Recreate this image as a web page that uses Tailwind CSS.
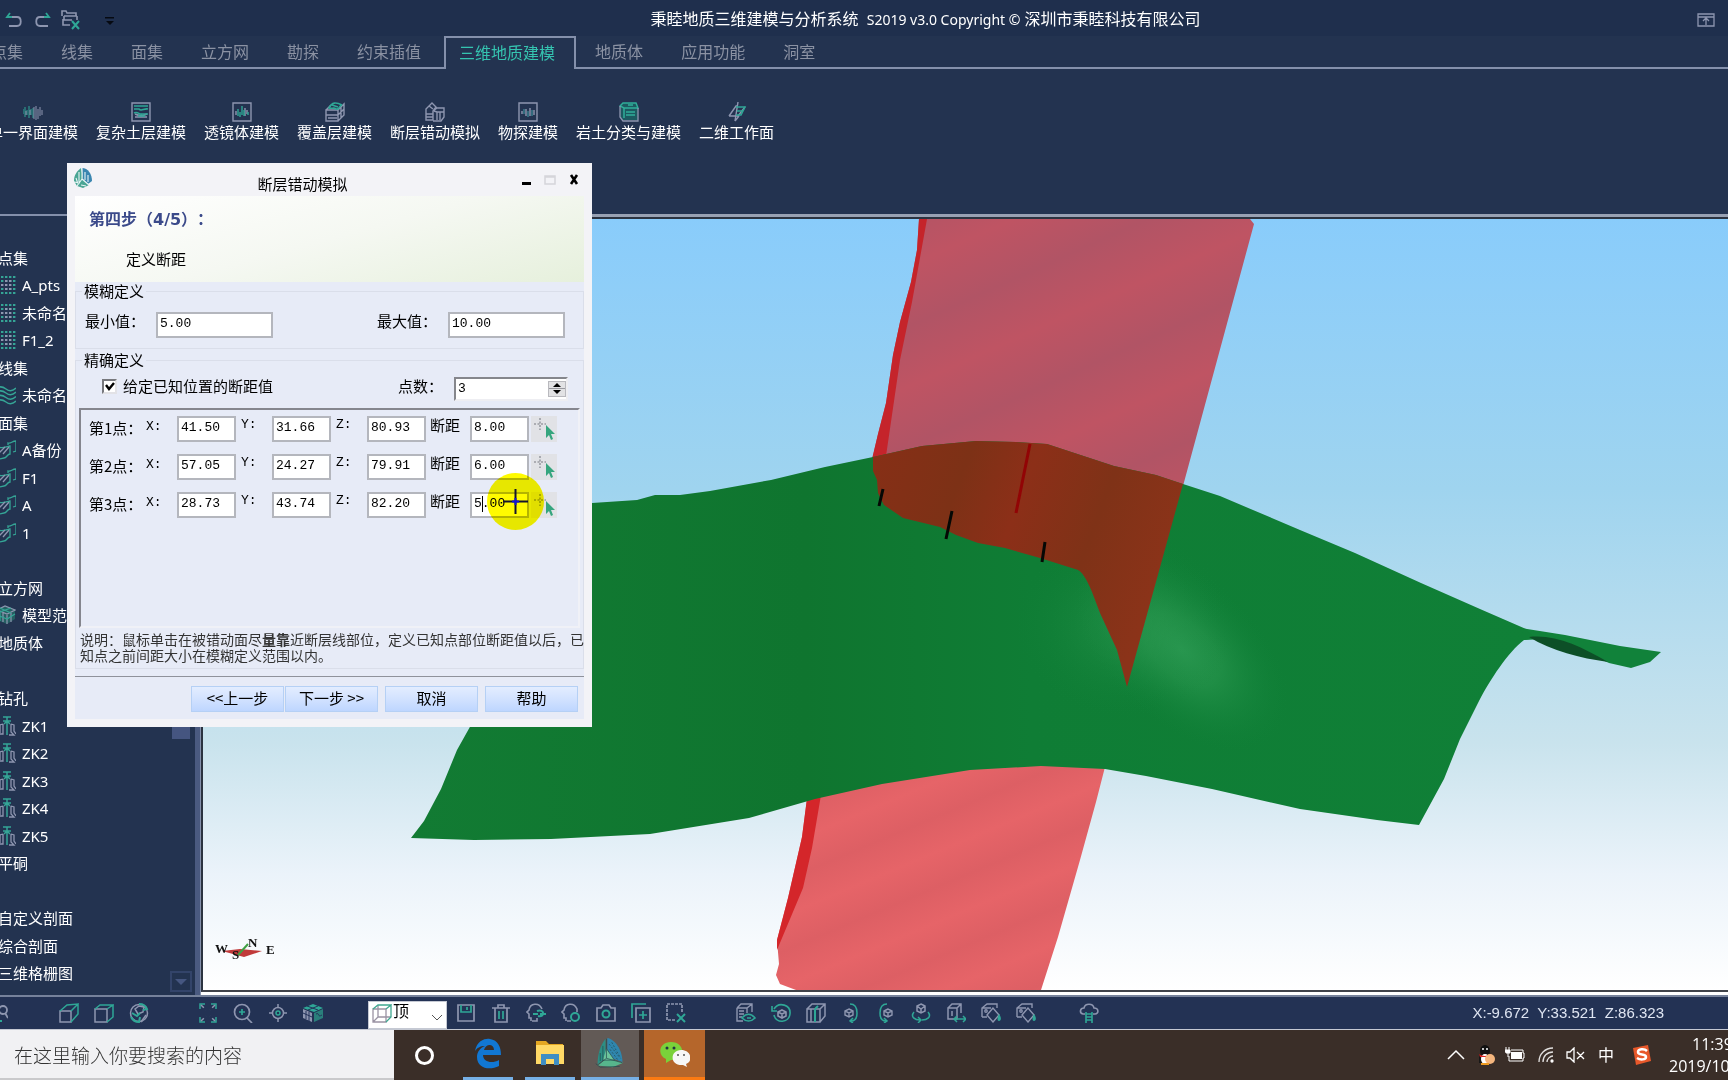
<!DOCTYPE html>
<html lang="zh-CN">
<head>
    <meta charset="UTF-8">
    <meta name="viewport" content="width=device-width, initial-scale=1.0">
    <title>秉睦地质三维建模与分析系统</title>
    <script src="https://cdn.jsdelivr.net/npm/@tailwindcss/browser@4"></script>
</head>
<body class="h-screen flex flex-col overflow-hidden bg-[#233350] text-white font-['Noto_Sans','Noto_Sans_CJK_SC',sans-serif]">

    <!-- 公用图标 -->
    <svg class="hidden">
        <symbol id="i-pts" viewBox="0 0 20 20">
            <path d="M1 2h19M1 6h19M1 14h19M1 18h19M1 10h3M17 10h3" stroke="#35a596" stroke-width="2.200" stroke-dasharray="2.400 1.600"/>
            <path d="M5 10h11M9 6h7M9 14h7" stroke="#8e96b0" stroke-width="2.200" stroke-dasharray="2.400 1.600"/>
        </symbol>
        <symbol id="i-line" viewBox="0 0 20 20">
            <path d="M0 4c3-3 6-3 10 0s7 2 10-1M0 8c3-3 6-3 10 0s7 2 10-1M0 12.500c3-3 6-3 10 0s7 2 10-1M0 17c3-3 6-3 10 0s7 2 10-1" fill="none" stroke="#35a596" stroke-width="1.500"/>
        </symbol>
        <symbol id="i-face" viewBox="0 0 20 20">
            <path d="M12 5V3c3 1 4-2 8-2v10l-3 1M3 7c3 2 6 0 11-1v8c-3 0-3 4-6 4l-5 1v-4l-2-1V8z" fill="none" stroke="#35a596" stroke-width="1.300"/>
            <path d="M3 13l6-6M7 14l6-7" stroke="#8e96b0" stroke-width="1.300"/>
        </symbol>
        <symbol id="i-cube" viewBox="0 0 20 20">
            <path d="M1 5l8-4 10 4v9l-8 5-10-4z" fill="#255f62"/>
            <g fill="none" stroke="#8e96b0" stroke-width="1.200">
                <path d="M1 5l8-4 10 4-8 4zM11 10v9M15 8v9M7 8v9"/>
            </g>
            <path d="M1 10l10 4 8-5M4 3l11 5M15 3L4 7v9" fill="none" stroke="#35a596" stroke-width="1.200"/>
        </symbol>
        <symbol id="i-drill" viewBox="0 0 20 20">
            <path d="M7 1h8M11 1v18M7 5h8M11 5l-3 3M11 5l3 3" fill="none" stroke="#35a596" stroke-width="1.500"/>
            <path d="M7 8v10H2M7 8L4 9v8M15 8v8l3 3h-5M15 8l3 1v6l2 3" fill="none" stroke="#8e96b0" stroke-width="1.300"/>
        </symbol>
        <symbol id="i-logo" viewBox="0 0 36 36">
            <path d="M15 1C23 2 32 14 32 28L20 24 15 18z" fill="#2f86ad"/>
            <path d="M13 2C8 8 4 18 4 31l9-7z" fill="#2c8f84"/>
            <path d="M4 32l10-8 19 5-12 5z" fill="#57b58c"/>
            <path d="M14 13l-4 13 13 0z" fill="#6cc49c"/>
            <g fill="none" stroke="#25484f" stroke-width="1" opacity=".8">
                <path d="M14 2v22M14 24l18 5M14 24L5 31M10 10v17M7 18v9M14 13l9 13H10M2 30l5 4 22-1"/>
                <path d="M17 8l11 14M18 14l9 12M20 6l10 18" stroke-dasharray="2 2"/>
            </g>
        </symbol>
        <symbol id="i-logo-small" viewBox="0 0 20 22">
            <path d="M9 1c6 0 10 6 10 13l-4 3-5-5z" fill="#3a86b0"/>
            <path d="M8 1C4 4 1 8 1 14l3 5 6 2 6-3-6-6z" fill="#4aa594"/>
            <g fill="none" stroke="#e8f4f5" stroke-width="1.100">
                <path d="M9 1v11M9 12l7 6M9 12l-5 7M6 5v10M3 11l2 6M12 5v8M15 8v7M1 15l6 1M8 18l5 1"/>
            </g>
        </symbol>
        <symbol id="i-pick" viewBox="0 0 24 24">
            <path d="M8 1v12M2 7h12" stroke="#9a9ca3" stroke-width="1.600" stroke-dasharray="2 1.500"/>
            <path d="M14 8v13l3-3 2 5 2-1-2-5h4z" fill="#35a57e"/>
        </symbol>
        <symbol id="i-bucket" viewBox="0 0 20 20">
            <g fill="none" stroke="#8e96b0" stroke-width="1.400">
                <path d="M1 14V5l5-4h10v4M1 5h9M1 14l5 0"/>
                <path d="M12 5l-6 7 6 7 6-7z"/><circle cx="5" cy="8" r="1.200"/>
            </g>
            <path d="M18 11c3 4 2 7 0 7s-2-3 0-7z" fill="#2fa796"/>
        </symbol>
        <symbol id="i-rot" viewBox="0 0 20 20">
            <path d="M8 6l4 2v4l-4 2-4-2V8zM4 8l4 2 4-2M8 10v4" fill="none" stroke="#8e96b0" stroke-width="1.400"/>
            <path d="M9 1c5 0 7 4 7 9s-2 8-6 8M12 15l-3 3 3 2" fill="none" stroke="#2fa796" stroke-width="1.500"/>
        </symbol>
    </svg>

    <!-- 标题栏 -->
    <header class="h-9 shrink-0 bg-[#1f2f4d] flex items-center relative">
        <div class="flex items-center gap-2 pl-1 pt-1">
            <button type="button" aria-label="撤销" class="w-5 h-5">
                <svg viewBox="0 0 20 20" fill="none" stroke-width="1.800"><path d="M4 7h9c5 0 5 9 0 9H5" stroke="#8e96b0"/><path d="M6 3L3 7h5" stroke="#2fa796"/></svg>
            </button>
            <button type="button" aria-label="重做" class="w-5 h-5">
                <svg viewBox="0 0 20 20" fill="none" stroke-width="1.800"><path d="M16 7H8c-5 0-5 9 0 9h8" stroke="#8e96b0"/><path d="M14 3l3 4h-5" stroke="#2fa796"/></svg>
            </button>
            <button type="button" aria-label="清除" class="w-5 h-5">
                <svg viewBox="0 0 20 20" fill="none" stroke-width="1.600"><path d="M2 6V1h4l1 2h9v3M4 6h13M10 15H3V9M4 6v4M17 6v4M3 10h9" stroke="#8e96b0"/><path d="M12 11l7 8M19 11l-7 8" stroke="#2fa796" stroke-width="2"/></svg>
            </button>
            <button type="button" aria-label="更多" class="w-3 h-5 ml-4">
                <svg viewBox="0 0 12 20" fill="#060a12"><path d="M1 7h9v1.500H1zM2 11h8l-4 4z"/></svg>
            </button>
        </div>
        <h1 class="absolute inset-x-0 top-[7px] text-center text-base leading-6 pl-[123px] whitespace-pre">秉睦地质三维建模与分析系统  <span class="text-sm">S2019 v3.0 Copyright ©</span> 深圳市秉睦科技有限公司</h1>
        <button type="button" aria-label="折叠" class="ml-auto mr-3 mt-1 w-5 h-5">
            <svg viewBox="0 0 20 20" fill="none" stroke="#8e96b0" stroke-width="1.300"><path d="M2 4h16v12H2zM2 7h16M10 15V9M7 11l3-3 3 3"/></svg>
        </button>
    </header>

    <!-- 选项卡 -->
    <nav class="h-[33px] shrink-0 flex items-stretch text-base leading-[30px] text-[#8b92a3] whitespace-nowrap">
        <div class="flex border-b-2 border-[#8490ab]">
            <button type="button" class="-ml-7 px-[19px]">点集</button>
            <button type="button" class="px-[19px]">线集</button>
            <button type="button" class="px-[19px]">面集</button>
            <button type="button" class="px-[19px]">立方网</button>
            <button type="button" class="px-[19px]">勘探</button>
            <button type="button" class="pl-[19px] pr-[23px]">约束插值</button>
        </div>
        <button type="button" class="pl-[13px] pr-[19px] pb-1 border-2 border-b-0 border-[#8490ab] text-[#35c4b0]">三维地质建模</button>
        <div class="flex flex-1 border-b-2 border-[#8490ab]">
            <button type="button" class="px-[19px]">地质体</button>
            <button type="button" class="px-[19px]">应用功能</button>
            <button type="button" class="px-[19px]">洞室</button>
        </div>
    </nav>

    <!-- 功能区 -->
    <section class="h-[145px] shrink-0 flex items-start gap-[18px] pt-[33px] -ml-3 text-[15px] leading-[21px] whitespace-nowrap">
        <button type="button" class="flex flex-col items-center">
            <svg class="w-5 h-5" viewBox="0 0 20 20" fill="none"><path d="M0 7v5M2 5v10M4 8v5M6 4v12M8 7v6M10 6v10" stroke="#2fa796"/><path d="M3 9v4M7 8v5M11 5v12M13 4v14M15 7v10M17 5v9M19 8v5" stroke="#8e96b0"/></svg>
            单一界面建模
        </button>
        <button type="button" class="flex flex-col items-center">
            <svg class="w-5 h-5" viewBox="0 0 20 20" fill="none"><path d="M1 1h18v18H1zM4 15h12M4 12c4 2 8 2 12 0" stroke="#8e96b0" stroke-width="1.400"/><path d="M3 4h14M3 7h5c2 3 5-1 9 0M3 11c4-2 5 2 8 1h6M7 14h7" stroke="#2fa796" stroke-width="1.600"/></svg>
            复杂土层建模
        </button>
        <button type="button" class="flex flex-col items-center">
            <svg class="w-5 h-5" viewBox="0 0 20 20" fill="none"><path d="M1 1h18v18H1zM4 9v4M13 6v8M15 8v4" stroke="#8e96b0" stroke-width="1.400"/><path d="M6 7v7M8 10v5M10 4v9M12 8v6M16 10v3" stroke="#2fa796" stroke-width="1.400"/></svg>
            透镜体建模
        </button>
        <button type="button" class="flex flex-col items-center">
            <svg class="w-5 h-5" viewBox="0 0 20 20" fill="none"><path d="M1 8v11h12V8zM13 19l6-6V2l-6 6M1 8l5-5M1 13h12l6-6M3 16h9M16 5v11" stroke="#8e96b0" stroke-width="1.400"/><path d="M4 6c3-6 7-6 13-3-3 0-2 5-6 4-2-2-4 0-7-1zM7 3l6 2" stroke="#2fa796" stroke-width="1.600"/></svg>
            覆盖层建模
        </button>
        <button type="button" class="flex flex-col items-center">
            <svg class="w-5 h-5" viewBox="0 0 20 20" fill="none" stroke="#8e96b0" stroke-width="1.400"><path d="M1 7l6-6 4 4-3 4v9H1zM1 12h7M1 15h7M8 9l4-3h7v9l-3 4H8M12 18v-8h7M12 10L9 9M15 10v8M4 4l4 3"/></svg>
            断层错动模拟
        </button>
        <button type="button" class="flex flex-col items-center">
            <svg class="w-5 h-5" viewBox="0 0 20 20" fill="none"><path d="M1 1h18v18H1zM4 9v3M8 7v7M12 6v8M16 8v5" stroke="#8e96b0" stroke-width="1.400"/><path d="M6 7v5M10 9v6M14 8v6" stroke="#39808f" stroke-width="1.400"/></svg>
            物探建模
        </button>
        <button type="button" class="flex flex-col items-center">
            <svg class="w-5 h-5" viewBox="0 0 20 20" fill="none"><path d="M1 4l3-3h13l2 5v12H4l-3-3z" fill="#1c5a60"/><path d="M1 4l3-3h13l2 5H5zM7 10h9M7 13h9M5 6v10M9 3h5" stroke="#2fae99" stroke-width="1.500"/><path d="M1 4v11l3 4h15V6" stroke="#8e96b0" stroke-width="1.300"/></svg>
            岩土分类与建模
        </button>
        <button type="button" class="flex flex-col items-center">
            <svg class="w-5 h-5" viewBox="0 0 20 20" fill="none"><path d="M11 0L8 19M2 14L9 4h2M2 14h9l7-9M8 19l4-5" stroke="#8e96b0" stroke-width="1.400"/><path d="M9 5h9l-4 8h-5M10 9h6" stroke="#2fa796" stroke-width="1.500"/></svg>
            二维工作面
        </button>
    </section>

    <main class="flex-1 min-h-0 flex">
        <!-- 对象树 -->
        <aside class="w-[201px] shrink-0 flex border-t-2 border-[#8490ab]">
            <ul class="flex-1 flex flex-col pt-7 pb-2 text-[15px] leading-5 whitespace-nowrap overflow-hidden">
                <li class="flex-1 flex items-center -ml-0.5">点集</li>
                <li class="flex-1 flex items-center gap-1.5"><svg class="w-5 h-5 -ml-1"><use href="#i-pts"/></svg>A_pts</li>
                <li class="flex-1 flex items-center gap-1.5"><svg class="w-5 h-5 -ml-1"><use href="#i-pts"/></svg>未命名</li>
                <li class="flex-1 flex items-center gap-1.5"><svg class="w-5 h-5 -ml-1"><use href="#i-pts"/></svg>F1_2</li>
                <li class="flex-1 flex items-center -ml-0.5">线集</li>
                <li class="flex-1 flex items-center gap-1.5"><svg class="w-5 h-5 -ml-1"><use href="#i-line"/></svg>未命名</li>
                <li class="flex-1 flex items-center -ml-0.5">面集</li>
                <li class="flex-1 flex items-center gap-1.5"><svg class="w-5 h-5 -ml-1"><use href="#i-face"/></svg>A备份</li>
                <li class="flex-1 flex items-center gap-1.5"><svg class="w-5 h-5 -ml-1"><use href="#i-face"/></svg>F1</li>
                <li class="flex-1 flex items-center gap-1.5"><svg class="w-5 h-5 -ml-1"><use href="#i-face"/></svg>A</li>
                <li class="flex-1 flex items-center gap-1.5"><svg class="w-5 h-5 -ml-1"><use href="#i-face"/></svg>1</li>
                <li class="flex-1"></li>
                <li class="flex-1 flex items-center -ml-0.5">立方网</li>
                <li class="flex-1 flex items-center gap-1.5"><svg class="w-5 h-5 -ml-1"><use href="#i-cube"/></svg>模型范</li>
                <li class="flex-1 flex items-center -ml-0.5">地质体</li>
                <li class="flex-1"></li>
                <li class="flex-1 flex items-center -ml-0.5">钻孔</li>
                <li class="flex-1 flex items-center gap-1.5"><svg class="w-5 h-5 -ml-1"><use href="#i-drill"/></svg>ZK1</li>
                <li class="flex-1 flex items-center gap-1.5"><svg class="w-5 h-5 -ml-1"><use href="#i-drill"/></svg>ZK2</li>
                <li class="flex-1 flex items-center gap-1.5"><svg class="w-5 h-5 -ml-1"><use href="#i-drill"/></svg>ZK3</li>
                <li class="flex-1 flex items-center gap-1.5"><svg class="w-5 h-5 -ml-1"><use href="#i-drill"/></svg>ZK4</li>
                <li class="flex-1 flex items-center gap-1.5"><svg class="w-5 h-5 -ml-1"><use href="#i-drill"/></svg>ZK5</li>
                <li class="flex-1 flex items-center -ml-0.5">平硐</li>
                <li class="flex-1"></li>
                <li class="flex-1 flex items-center -ml-0.5">自定义剖面</li>
                <li class="flex-1 flex items-center -ml-0.5">综合剖面</li>
                <li class="flex-1 flex items-center -ml-0.5">三维格栅图</li>
            </ul>
            <!-- 滚动条 -->
            <div class="w-[22px] mr-[3px] flex flex-col justify-between pb-[3px]">
                <div class="h-[523px] mx-0.5 bg-[#455580]"></div>
                <button type="button" aria-label="向下滚动" class="h-[21px] border-2 border-[#33446a] flex items-center justify-center">
                    <svg class="w-3 h-2" viewBox="0 0 12 8"><path d="M0 1h12L6 7z" fill="#455680"/></svg>
                </button>
            </div>
            <div class="w-1.5 bg-[#4a5a80] border-r border-[#8490ab]"></div>
        </aside>

        <!-- 三维视图 -->
        <div class="flex-1 min-w-0 flex flex-col bg-white border-t-3 border-[#98a1b3]">
            <div class="flex-1 min-h-0 border-2 border-r-0 border-[#2b3340] border-b-[#40434a] mb-[3px]">
                <svg class="block w-full h-full" viewBox="203 219 1525 771" preserveAspectRatio="none">
                    <defs>
                        <linearGradient id="sky" x1="0" y1="0" x2="0" y2="1">
                            <stop offset="0" stop-color="#89ccfb"/>
                            <stop offset=".35" stop-color="#9fd4ef"/>
                            <stop offset=".68" stop-color="#c9e3ed"/>
                            <stop offset=".85" stop-color="#ebf3fa"/>
                            <stop offset="1" stop-color="#fff"/>
                        </linearGradient>
                        <linearGradient id="green" x1="0" y1="0" x2="1" y2="0">
                            <stop offset="0" stop-color="#127b33"/>
                            <stop offset=".35" stop-color="#0f752f"/>
                            <stop offset=".55" stop-color="#0f7d35"/>
                            <stop offset="1" stop-color="#108037"/>
                        </linearGradient>
                        <radialGradient id="shine">
                            <stop offset="0" stop-color="#2e9c55"/>
                            <stop offset=".35" stop-color="#2a9850" stop-opacity=".7"/>
                            <stop offset=".7" stop-color="#1c8c44" stop-opacity=".3"/>
                            <stop offset="1" stop-color="#0f8037" stop-opacity="0"/>
                        </radialGradient>
                        <linearGradient id="fault" gradientUnits="userSpaceOnUse" x1="900" y1="210" x2="945" y2="310" spreadMethod="repeat">
                            <stop offset="0" stop-color="#b15465"/>
                            <stop offset=".5" stop-color="#bf5463"/>
                            <stop offset="1" stop-color="#b15465"/>
                        </linearGradient>
                        <linearGradient id="faultLow" gradientUnits="userSpaceOnUse" x1="880" y1="770" x2="905" y2="830" spreadMethod="repeat">
                            <stop offset="0" stop-color="#dd5f64"/>
                            <stop offset=".5" stop-color="#e66468"/>
                            <stop offset="1" stop-color="#dd5f64"/>
                        </linearGradient>
                        <linearGradient id="cut" x1="0" y1="0" x2="1" y2=".3">
                            <stop offset="0" stop-color="#872f16"/>
                            <stop offset=".3" stop-color="#7d3116"/>
                            <stop offset=".5" stop-color="#8c2f18"/>
                            <stop offset=".75" stop-color="#7f3217"/>
                            <stop offset="1" stop-color="#8b3319"/>
                        </linearGradient>
                    </defs>
                    <rect x="203" y="219" width="1525" height="771" fill="url(#sky)"/>
                    <!-- 断层面 -->
                    <path d="M919 219L1250 219 1254 224 1183 486 1040 480 872 460 878 434 886 403 893 355 900 322 911 282 917 250z" fill="url(#fault)"/>
                    <path d="M919 219h8L912 302 900 360 886 456 872 459 878 434 886 403 893 355 900 322 911 282 917 250z" fill="#c5242b"/>
                    <path d="M807 799L880 765 1041 755 1105 767 1096 802 1080 860 1058 937 1041 990H796L780 984 776 975 779 964 777 940 788 898 802 837z" fill="url(#faultLow)"/>
                    <path d="M807 798L821 795 812 848 803 888 777 950V940L788 898 802 837z" fill="#d4262a"/>
                    <!-- 地层面 -->
                    <path d="M1520 628L1565 635 1620 646 1661 652 1650 662 1631 668 1609 663 1576 648 1545 639 1524 640z" fill="#11823a"/>
                    <path d="M560 508L592 503 637 500 655 495 680 495 710 491 771 480 825 467 873 457 922 446 976 441 1016 442 1047 444 1114 466 1156 475 1183 484 1220 496 1300 530 1355 553 1421 583 1480 609 1526 629 1536 638 1524 640C1508 652 1490 680 1479 701L1460 739 1444 779 1419 825 1377 820 1300 809 1212 789 1146 776 1105 769 1041 766 970 770 882 784 815 799 749 818 650 834 551 839 474 840 411 838 424 821 441 789 457 750 471 725z" fill="url(#green)"/>
                    <path d="M1529 637C1555 634 1580 646 1608 662 1580 658 1552 651 1529 637z" fill="#0d4f27"/>
                    <ellipse cx="1182" cy="650" rx="130" ry="75" fill="url(#shine)" transform="rotate(42 1182 650)" opacity=".85"/>
                    <ellipse cx="1125" cy="625" rx="110" ry="95" fill="url(#shine)" opacity=".4"/>
                    <path d="M873 457L922 446 976 441 1016 442 1047 444 1114 466 1156 475 1183 484 1127 687 1117 650 1111 637 1100 613 1092 592C1087 580 1082 570 1075 569L1040 558 1005 548 978 543 956 535 940 527 903 518 884 505 878 493 877 480 873 471z" fill="url(#cut)"/>
                    <path d="M1030 444l-14 69" stroke="#920405" stroke-width="3"/>
                    <path d="M883 489l-4 17M952 511l-6 28M1045 542l-3 20" stroke="#050805" stroke-width="3"/>
                    <!-- 方位标 -->
                    <path d="M222 951l18-2 22 2-18 6z" fill="#c03a3a"/>
                    <path d="M238 955l10-11" stroke="#3fa043" stroke-width="2"/>
                    <g fill="#111" font-family="Liberation Serif, serif" font-weight="bold" font-size="13">
                        <text x="215" y="953">W</text><text x="248" y="947">N</text><text x="266" y="954">E</text><text x="232" y="959">S</text>
                    </g>
                </svg>
            </div>
        </div>
    </main>

    <!-- 视图工具栏 -->
    <footer class="h-[35px] shrink-0 flex items-center border-t-2 border-b border-t-[#76829b] border-b-[#c5c9d3] bg-[#23335a]/40">
        <button type="button" aria-label="查找" class="w-5 h-5 -ml-3 mr-[51px]"><svg viewBox="0 0 20 20" fill="none" stroke="#8e96b0" stroke-width="1.800"><circle cx="15" cy="7" r="4"/><path d="M17 10l3 5"/><path d="M10 18h4" stroke="#2fa796"/></svg></button>
        <div class="flex gap-[15px]">
            <button type="button" aria-label="透视" class="w-5 h-5"><svg viewBox="0 0 20 20" fill="none" stroke-width="1.500"><path d="M1 8h11v11H1z" stroke="#8e96b0"/><path d="M1 8l7-6 11-1-7 7M19 1v10l-7 8" stroke="#2fa796"/></svg></button>
            <button type="button" aria-label="平行" class="w-5 h-5"><svg viewBox="0 0 20 20" fill="none" stroke-width="1.500"><path d="M1 6h12v13H1z" stroke="#8e96b0"/><path d="M1 6l5-4h13l-6 4M19 2v12l-6 5" stroke="#2fa796"/></svg></button>
            <button type="button" aria-label="旋转" class="w-5 h-5"><svg viewBox="0 0 20 20" fill="none" stroke-width="1.500"><circle cx="10" cy="10" r="8.500" stroke="#8e96b0"/><path d="M6 6l4-3 5 1-1 5-5 2zM12 19l5-7" stroke="#8e96b0"/><path d="M10 1c4 0 7 2 8 5l-4 1M2 14c2 4 5 5 8 5l1-5M3 10l5 3 3-3" stroke="#2fa796" stroke-width="2"/></svg></button>
        </div>
        <div class="flex gap-[15px] ml-[49px]">
            <button type="button" aria-label="全图" class="w-5 h-5"><svg viewBox="0 0 20 20" fill="none" stroke-width="1.500"><path d="M7 1H2v5M13 1h5v5M7 19H2v-5M13 19h5v-5" stroke="#2fa796"/><path d="M3 2l5 5M17 2l-5 5M3 18l5-5M17 18l-5-5" stroke="#8e96b0" stroke-dasharray="4 3"/></svg></button>
            <button type="button" aria-label="放大" class="w-5 h-5"><svg viewBox="0 0 20 20" fill="none" stroke-width="1.700"><circle cx="9" cy="9" r="7.500" stroke="#8e96b0"/><path d="M14 15l5 5" stroke="#8e96b0"/><path d="M9 6v6M6 9h6" stroke="#2fa796"/></svg></button>
            <button type="button" aria-label="定位" class="w-5 h-5"><svg viewBox="0 0 20 20" fill="none" stroke-width="1.500"><circle cx="10" cy="10" r="5.500" stroke="#8e96b0"/><circle cx="10" cy="10" r="2" stroke="#2fa796"/><path d="M10 1v3M10 16v3M1 10h3M16 10h3" stroke="#8e96b0"/></svg></button>
            <button type="button" aria-label="立方体" class="w-5 h-5"><svg viewBox="0 0 20 20"><path d="M0 5l10-4 10 4-9 4z" fill="#2fa796"/><path d="M0 6l9 4v9l-9-4z" fill="#8e96b0"/><path d="M11 10l9-4v9l-9 4z" fill="#2a7f7b"/><path d="M3 8v8M6 9v9M0 10l9 4M4 3l11 4M15 3L5 7M13 11c4-2 1 4 6 1" stroke="#23335a" fill="none"/></svg></button>
        </div>
        <div class="relative ml-[45px] w-[79px] h-7">
            <select aria-label="视图方向" class="appearance-none w-full h-full bg-white text-black text-base leading-4 pl-6 pb-2 rounded-none border border-[#c5c9d3]">
                <option>顶</option>
            </select>
            <svg class="absolute left-1 top-1 w-5 h-5 pointer-events-none" viewBox="0 0 20 20" fill="none" stroke-width="1.300"><path d="M1 6h13v13H1zM6 2v12h13M6 14l-5 5" stroke="#9a93a3"/><path d="M1 6l5-4h13l-5 4M19 2v12l-5 5" stroke="#3fa890"/></svg>
            <svg class="absolute right-1 top-3 w-3 h-3 pointer-events-none" viewBox="0 0 12 12" fill="none" stroke="#555"><path d="M1 4l5 5 5-5"/></svg>
        </div>
        <div class="flex gap-[15px] ml-[9px]">
            <button type="button" aria-label="保存" class="w-5 h-5"><svg viewBox="0 0 20 20" fill="none" stroke-width="1.700"><path d="M2 2h16v16H2z" stroke="#8e96b0"/><path d="M5 2v7h10V2M11 4v3" stroke="#2fa796"/></svg></button>
            <button type="button" aria-label="删除" class="w-5 h-5"><svg viewBox="0 0 20 20" fill="none" stroke-width="1.700"><path d="M1 5h18M7 5V2h6v3M4 5v14h12V5" stroke="#8e96b0"/><path d="M8 8v8M12 8v8" stroke="#2fa796"/></svg></button>
            <button type="button" aria-label="漫游" class="w-5 h-5"><svg viewBox="0 0 20 20" fill="none" stroke-width="1.600"><path d="M5 18v-3H3v-4l-2-2 2-2C4 0 13-1 16 6M6 18h5v-3" stroke="#8e96b0"/><path d="M7 11h5M11 8c8-3 8 7 1 5M14 11h6" stroke="#2fa796" stroke-width="2"/></svg></button>
            <button type="button" aria-label="观察" class="w-5 h-5"><svg viewBox="0 0 20 20" fill="none" stroke-width="1.600"><path d="M5 18v-3H3v-4l-2-2 2-2C4 0 13-1 16 6v3M6 18h4" stroke="#8e96b0"/><circle cx="14" cy="14" r="4" stroke="#2fa796" stroke-width="2"/></svg></button>
            <button type="button" aria-label="截图" class="w-5 h-5"><svg viewBox="0 0 20 20" fill="none" stroke-width="1.700"><path d="M1 5h4l2-3h6l2 3h4v13H1z" stroke="#8e96b0"/><circle cx="10" cy="11" r="3.500" stroke="#2fa796" stroke-width="2"/></svg></button>
            <button type="button" aria-label="新建" class="w-5 h-5"><svg viewBox="0 0 20 20" fill="none" stroke-width="1.700"><path d="M5 5h14v14H5z" stroke="#8e96b0"/><path d="M1 15V1h14M12 8v8M8 12h8" stroke="#2fa796"/></svg></button>
            <button type="button" aria-label="取消选择" class="w-5 h-5"><svg viewBox="0 0 20 20" fill="none" stroke-width="1.700"><path d="M9 17H1V1h15v8" stroke="#8e96b0" stroke-dasharray="3 1"/><path d="M11 11l8 8M19 11l-8 8" stroke="#2fa796" stroke-width="2"/></svg></button>
        </div>
        <div class="flex gap-[15px] ml-[50px]">
            <button type="button" aria-label="显示" class="w-5 h-5"><svg viewBox="0 0 20 20" fill="none" stroke-width="1.400"><path d="M1 5v13h6M1 5l4-4h11v8M1 5h10l5-4M11 5v5M3 8h5M3 11h5M3 14h3" stroke="#8e96b0"/><path d="M6 15c4-5 9-5 13 0-4 4-9 4-13 0zM11 15h4" stroke="#2fa796" stroke-width="1.700"/></svg></button>
            <button type="button" aria-label="自转" class="w-5 h-5"><svg viewBox="0 0 20 20" fill="none" stroke-width="1.600"><path d="M3 6c5-8 17-4 16 5s-14 10-16 1M1 3v5h5" stroke="#2fa796"/><path d="M11 7l4 2v4l-4 2-4-2V9zM7 9l4 2 4-2M11 11v4" stroke="#8e96b0"/></svg></button>
            <button type="button" aria-label="切面" class="w-5 h-5"><svg viewBox="0 0 20 20" fill="none" stroke-width="1.500"><path d="M1 6v13h13V6zM1 6l5-5h13v12l-5 6M14 6l5-5M5 6v13" stroke="#8e96b0"/><path d="M9 6v13M12 3L9 6" stroke="#2fa796" stroke-width="2"/></svg></button>
            <button type="button" aria-label="右转" class="w-5 h-5"><svg viewBox="0 0 20 20"><use href="#i-rot"/></svg></button>
            <button type="button" aria-label="左转" class="w-5 h-5"><svg viewBox="0 0 20 20"><use href="#i-rot" transform="matrix(-1 0 0 1 20 0)"/></svg></button>
            <button type="button" aria-label="翻转" class="w-5 h-5"><svg viewBox="0 0 20 20" fill="none" stroke-width="1.500"><path d="M10 1l4 2v5l-4 2-4-2V3zM6 3l4 3 4-3M10 6v4" stroke="#8e96b0"/><path d="M3 9c-4 5 1 8 6 8M17 9c4 5-1 8-6 8M7 14l3 3-3 3" stroke="#2fa796"/></svg></button>
            <button type="button" aria-label="平移" class="w-5 h-5"><svg viewBox="0 0 20 20" fill="none" stroke-width="1.500"><path d="M2 5v11h9V5zM2 5l4-4h9v9M11 5l4-4M6 8v5" stroke="#8e96b0"/><path d="M8 16h12M11 13l-3 3 3 3M17 13l3 3-3 3" stroke="#2fa796"/></svg></button>
            <button type="button" aria-label="填充" class="w-5 h-5"><svg viewBox="0 0 20 20"><use href="#i-bucket"/></svg></button>
            <button type="button" aria-label="全部填充" class="w-5 h-5"><svg viewBox="0 0 20 20"><use href="#i-bucket"/></svg></button>
        </div>
        <button type="button" aria-label="钻孔" class="w-5 h-5 ml-[43px]"><svg viewBox="0 0 20 20" fill="none" stroke-width="1.600"><path d="M6 11H4c-4-1-3-6 1-6 1-5 9-5 10 0 5 0 5 6 1 6h-2" stroke="#8e96b0"/><path d="M7 9v11M13 9v11M7 11h6M7 14h6M7 17h6" stroke="#2fa796"/></svg></button>
        <output class="ml-auto mr-16 text-[15px] text-[#dfe5f2] whitespace-pre font-['Liberation_Sans',sans-serif]">X:-9.672  Y:33.521  Z:86.323</output>
    </footer>

    <!-- 任务栏 -->
    <div class="h-[50px] shrink-0 flex bg-[#3a2e28] overflow-hidden">
        <input type="text" aria-label="搜索" placeholder="在这里输入你要搜索的内容" class="w-[394px] h-full shrink-0 bg-[#f1f1f3] px-[14px] text-[19px] text-[#222] placeholder:text-[#333] border-b-2 border-[#c9c9cb] font-['Noto_Sans_CJK_SC',sans-serif] font-light">
        <button type="button" aria-label="Cortana" class="w-[61px] flex items-center justify-center"><span class="w-[19px] h-[19px] rounded-full border-3 border-white"></span></button>
        <button type="button" aria-label="Edge" class="ml-0.5 w-[62px] px-[6px] flex flex-col items-center justify-end">
            <svg class="w-7 h-8 mb-2" viewBox="0 0 28 32"><path d="M1 14C3 3 12 1 16 2c8 1 11 8 11 16H9c0 7 9 9 16 5v6C15 34 3 31 3 20c0-5 3-9 8-11-5 0-8 2-10 5zm9-1h10c0-6-8-7-10 0z" fill="#1177d3"/></svg>
            <span class="w-full h-[3px] bg-[#76b0e6]"></span>
        </button>
        <button type="button" aria-label="文件资源管理器" class="w-[62px] px-[6px] flex flex-col items-center justify-end">
            <svg class="w-7 h-7 mb-2.5" viewBox="0 0 28 28"><path d="M0 2h10l3 3h14v20H0z" fill="#e4a722"/><path d="M0 6h28v19H0z" fill="#ffd966"/><path d="M5 15h18v11h-5v-6h-8v6H5z" fill="#3f8ec4"/></svg>
            <span class="w-full h-[3px] bg-[#76b0e6]"></span>
        </button>
        <button type="button" aria-label="地质建模" class="w-[58px] bg-[#625a56] flex flex-col items-center justify-end">
            <svg class="w-8 h-9 mb-1.5"><use href="#i-logo"/></svg>
            <span class="w-full h-[3px] bg-[#76b0e6]"></span>
        </button>
        <button type="button" aria-label="微信" class="ml-[5px] w-[61px] bg-[#b5662b] flex flex-col items-center justify-end">
            <svg class="w-[30px] h-[26px] mb-2.5" viewBox="0 0 30 26"><path d="M11 1c15 0 15 19 0 18l-5 3 0-4C-4 13 0 1 11 1z" fill="#7ad13a"/><circle cx="7" cy="7" r="1.500" fill="#234"/><circle cx="14" cy="7" r="1.500" fill="#234"/><path d="M21 9c11 0 12 12 5 14l1 3-4-2C9 25 10 9 21 9z" fill="#f7f7f7"/><circle cx="18" cy="14" r="1" fill="#555"/><circle cx="24" cy="14" r="1" fill="#555"/></svg>
            <span class="w-full h-[3px] bg-[#fb7a12]"></span>
        </button>
        <div class="ml-auto flex items-center">
            <svg class="w-[18px] h-3 mr-3" viewBox="0 0 18 12" fill="none" stroke="#fff" stroke-width="1.500"><path d="M1 10l8-8 8 8"/></svg>
            <svg class="w-[18px] h-5 mr-[10px]" viewBox="0 0 18 20"><ellipse cx="8" cy="6" rx="5" ry="6" fill="#111"/><path d="M2 9h12l2 9H2z" fill="#181818"/><ellipse cx="8" cy="14" rx="4" ry="5" fill="#fff"/><path d="M2 9c4 3 9 2 12 0v3H3z" fill="#d8231f"/><circle cx="13" cy="14" r="5" fill="#f5b67e"/><path d="M4 19h8" stroke="#ee9b22" stroke-width="2"/><circle cx="6" cy="4" r="1" fill="#fff"/><circle cx="10" cy="4" r="1" fill="#fff"/></svg>
            <svg class="w-5 h-4 mr-[13px]" viewBox="0 0 20 16"><path d="M6 5h11v7H6z" fill="#fff"/><path d="M6 3h12v3h1v5h-1v3H4V9" fill="none" stroke="#fff"/><path d="M1 0v3M4 0v3M0 3h5v3H1zM3 6v4" fill="#fff" stroke="#fff"/></svg>
            <svg class="w-4 h-4 mr-[12px]" viewBox="0 0 16 16" fill="none" stroke="#fff" stroke-width="1.300"><path d="M1 15C1 7 7 1 15 1M5 15c0-6 4-10 10-10M9 15c0-3 3-6 6-6" stroke-opacity=".85"/><circle cx="14" cy="14" r="1" fill="#fff"/></svg>
            <svg class="w-[19px] h-4 mr-[13px]" viewBox="0 0 19 16" fill="none" stroke="#fff" stroke-width="1.300"><path d="M1 5h3l4-4v14l-4-4H1zM11 5l7 7M18 5l-7 7"/></svg>
            <span class="w-4 text-base leading-5 mr-[18px]">中</span>
            <svg class="w-5 h-5 mr-[17px]" viewBox="0 0 20 20"><path d="M1 3L16 0l3 16-15 4z" fill="#e8582a"/><path d="M15 6c-3-3-9-2-9 1 0 4 8 1 8 5 0 3-6 3-9 1" fill="none" stroke="#fff" stroke-width="2.500"/></svg>
            <time class="w-[59px] text-base leading-[22px] overflow-hidden whitespace-nowrap font-['Open_Sans','Noto_Sans',sans-serif]"><span class="block pl-[23px] w-20">11:39</span><span class="block w-20">2019/10</span></time>
        </div>
    </div>

    <!-- 断层错动模拟 对话框 -->
    <div role="dialog" aria-labelledby="dlg-title" class="absolute left-[67px] top-[163px] w-[525px] px-2 pb-2 bg-[#f3f3f7] text-black text-[15px] leading-[18px] whitespace-nowrap font-['Noto_Sans_CJK_SC',sans-serif] [text-spacing-trim:space-all]">
        <div class="h-[33px] flex items-start relative">
            <svg class="w-5 h-[22px] mt-1 -ml-0.5"><use href="#i-logo-small"/></svg>
            <h2 id="dlg-title" class="absolute inset-x-0 top-3 text-center pr-[54px]">断层错动模拟</h2>
            <div class="ml-auto flex gap-3 pt-2 pr-1">
                <button type="button" aria-label="最小化" class="w-3 h-4"><svg viewBox="0 0 12 16"><path d="M2 11h9v3H2z"/></svg></button>
                <button type="button" aria-label="最大化" class="w-3 h-4"><svg viewBox="0 0 12 16" fill="none" stroke="#d5d5da" stroke-width="1.500"><path d="M1 5h10v8H1zM1 6h10"/></svg></button>
                <button type="button" aria-label="关闭" class="w-3 h-4"><svg viewBox="0 0 12 16" stroke="#000" stroke-width="2.600"><path d="M3 4l6 9M9 4l-6 9"/></svg></button>
            </div>
        </div>
        <div class="h-[86px] bg-linear-165 from-white via-[#f5f8f2] to-[#e6f0dc] pt-[14px] pl-[14px]">
            <h3 class="font-bold text-base leading-5 text-[#3b4a8a] font-['DejaVu_Sans','Noto_Sans_CJK_SC',sans-serif]">第四步（4/5）：</h3>
            <p class="mt-5 pl-[37px]">定义断距</p>
        </div>
        <div class="bg-[#e7ebf7] pb-[7px]">
            <fieldset class="min-w-0 h-[67px] border border-[#dadeea]">
                <legend class="ml-1.5 px-0.5">模糊定义</legend>
                <div class="h-[50px] flex items-center pl-[9px] pr-[18px]">
                    <label for="min" class="w-[71px] pb-2">最小值：</label>
                    <input id="min" type="text" value="5.00" class="w-[117px] h-[26px] px-0.5 pb-1 bg-white border-2 border-[#b4b6bd] text-[13px] font-['Liberation_Mono',monospace]">
                    <label for="max" class="w-[71px] pb-2 ml-auto">最大值：</label>
                    <input id="max" type="text" value="10.00" class="w-[117px] h-[26px] px-0.5 pb-1 bg-white border-2 border-[#b4b6bd] text-[13px] font-['Liberation_Mono',monospace]">
                </div>
            </fieldset>
            <fieldset class="min-w-0 mt-0.5 border border-[#dadeea]">
                <legend class="ml-1.5 px-0.5">精确定义</legend>
                <div class="h-[39px] flex items-center pl-[26px] pr-[15px]">
                    <span class="relative w-[15px] h-[15px] mb-1 mr-1.5">
                        <input id="known" type="checkbox" checked class="appearance-none block w-full h-full bg-white border-2 border-[#77787d] border-r-[#e2e2e6] border-b-[#e2e2e6]">
                        <svg class="absolute inset-0 pointer-events-none" viewBox="0 0 15 15" fill="none" stroke="#000" stroke-width="2.400"><path d="M4 6l3 4 5-6"/></svg>
                    </span>
                    <label for="known" class="pb-1.5">给定已知位置的断距值</label>
                    <label for="count" class="ml-auto w-14 pb-1.5">点数：</label>
                    <div class="w-[114px] h-[24px] flex items-center bg-white border-2 border-[#85868c] border-r-[#eeeef2] border-b-[#eeeef2]">
                        <input id="count" type="text" value="3" class="flex-1 min-w-0 h-full px-0.5 text-[13px] font-['Liberation_Mono',monospace]">
                        <div class="w-[18px] h-4 flex flex-col bg-[#e2e2e4] border border-[#b9b9be]">
                            <button type="button" aria-label="增加" class="flex-1 border-b border-[#9a9aa0]"><svg class="mx-auto w-2 h-1.5" viewBox="0 0 8 6"><path d="M0 5h8L4 1z"/></svg></button>
                            <button type="button" aria-label="减少" class="flex-1"><svg class="mx-auto w-2 h-1.5" viewBox="0 0 8 6"><path d="M0 1h8L4 5z"/></svg></button>
                        </div>
                    </div>
                </div>
                <div class="h-[220px] mx-[3px] pt-1.5 pl-2 flex flex-col gap-3 border-2 border-[#85868e] border-r-[#f0f1f7] border-b-[#f0f1f7] relative">
                    <div class="flex items-center h-[26px]">
                        <span class="w-[57px] pb-0.5">第1点：</span>
                        <label for="x1" class="w-[31px] pb-1 text-[13px] font-['Liberation_Mono',monospace]">X:</label>
                        <input id="x1" type="text" value="41.50" class="w-[59px] h-[26px] px-0.5 pb-1 bg-white border-2 border-[#b4b6bd] text-[13px] font-['Liberation_Mono',monospace]">
                        <label for="y1" class="w-9 pl-[5px] pb-2 text-[13px] font-['Liberation_Mono',monospace]">Y:</label>
                        <input id="y1" type="text" value="31.66" class="w-[59px] h-[26px] px-0.5 pb-1 bg-white border-2 border-[#b4b6bd] text-[13px] font-['Liberation_Mono',monospace]">
                        <label for="z1" class="w-9 pl-[5px] pb-2 text-[13px] font-['Liberation_Mono',monospace]">Z:</label>
                        <input id="z1" type="text" value="80.93" class="w-[59px] h-[26px] px-0.5 pb-1 bg-white border-2 border-[#b4b6bd] text-[13px] font-['Liberation_Mono',monospace]">
                        <label for="d1" class="w-11 pl-1 pb-2">断距</label>
                        <input id="d1" type="text" value="8.00" class="w-[59px] h-[26px] px-0.5 pb-1 bg-white border-2 border-[#b4b6bd] text-[13px] font-['Liberation_Mono',monospace]">
                        <button type="button" aria-label="拾取第1点" class="ml-0.5 w-[26px] h-[26px] bg-[#e1e2e6] flex items-center justify-center"><svg class="w-6 h-6"><use href="#i-pick"/></svg></button>
                    </div>
                    <div class="flex items-center h-[26px]">
                        <span class="w-[57px] pb-0.5">第2点：</span>
                        <label for="x2" class="w-[31px] pb-1 text-[13px] font-['Liberation_Mono',monospace]">X:</label>
                        <input id="x2" type="text" value="57.05" class="w-[59px] h-[26px] px-0.5 pb-1 bg-white border-2 border-[#b4b6bd] text-[13px] font-['Liberation_Mono',monospace]">
                        <label for="y2" class="w-9 pl-[5px] pb-2 text-[13px] font-['Liberation_Mono',monospace]">Y:</label>
                        <input id="y2" type="text" value="24.27" class="w-[59px] h-[26px] px-0.5 pb-1 bg-white border-2 border-[#b4b6bd] text-[13px] font-['Liberation_Mono',monospace]">
                        <label for="z2" class="w-9 pl-[5px] pb-2 text-[13px] font-['Liberation_Mono',monospace]">Z:</label>
                        <input id="z2" type="text" value="79.91" class="w-[59px] h-[26px] px-0.5 pb-1 bg-white border-2 border-[#b4b6bd] text-[13px] font-['Liberation_Mono',monospace]">
                        <label for="d2" class="w-11 pl-1 pb-2">断距</label>
                        <input id="d2" type="text" value="6.00" class="w-[59px] h-[26px] px-0.5 pb-1 bg-white border-2 border-[#b4b6bd] text-[13px] font-['Liberation_Mono',monospace]">
                        <button type="button" aria-label="拾取第2点" class="ml-0.5 w-[26px] h-[26px] bg-[#e1e2e6] flex items-center justify-center"><svg class="w-6 h-6"><use href="#i-pick"/></svg></button>
                    </div>
                    <div class="flex items-center h-[26px]">
                        <span class="w-[57px] pb-0.5">第3点：</span>
                        <label for="x3" class="w-[31px] pb-1 text-[13px] font-['Liberation_Mono',monospace]">X:</label>
                        <input id="x3" type="text" value="28.73" class="w-[59px] h-[26px] px-0.5 pb-1 bg-white border-2 border-[#b4b6bd] text-[13px] font-['Liberation_Mono',monospace]">
                        <label for="y3" class="w-9 pl-[5px] pb-2 text-[13px] font-['Liberation_Mono',monospace]">Y:</label>
                        <input id="y3" type="text" value="43.74" class="w-[59px] h-[26px] px-0.5 pb-1 bg-white border-2 border-[#b4b6bd] text-[13px] font-['Liberation_Mono',monospace]">
                        <label for="z3" class="w-9 pl-[5px] pb-2 text-[13px] font-['Liberation_Mono',monospace]">Z:</label>
                        <input id="z3" type="text" value="82.20" class="w-[59px] h-[26px] px-0.5 pb-1 bg-white border-2 border-[#b4b6bd] text-[13px] font-['Liberation_Mono',monospace]">
                        <label for="d3" class="w-11 pl-1 pb-2">断距</label>
                        <input id="d3" type="text" value="5.00" class="w-[59px] h-[26px] px-0.5 pb-1 bg-white border-2 border-[#b4b6bd] text-[13px] font-['Liberation_Mono',monospace]">
                        <button type="button" aria-label="拾取第3点" class="ml-0.5 w-[26px] h-[26px] bg-[#e1e2e6] flex items-center justify-center"><svg class="w-6 h-6"><use href="#i-pick"/></svg></button>
                    </div>
                    <!-- 鼠标高亮与光标 -->
                    <span class="absolute left-[401px] top-[86px] w-px h-4 bg-black"></span>
                    <span class="absolute left-[406px] top-[63px] w-[57px] h-[57px] rounded-full bg-[#fffb00] mix-blend-multiply"></span>
                    <svg class="absolute left-[422px] top-[79px] w-[25px] h-[25px]" viewBox="0 0 25 25" stroke-width="2"><path d="M12.500 0v25M0 12.500h25" stroke="#141430"/><path d="M12.500 9v7M9 12.500h7" stroke="#1414d8"/></svg>
                </div>
                <p class="h-10 pl-1 pt-[3px] text-[14px] leading-4 text-[#333]">说明：鼠标单击在被错动面尽<b>量靠</b>近断层线部位，定义已知点部位断距值以后，已<br>知点之前间距大小在模糊定义范围以内。</p>
            </fieldset>
            <div class="mt-[7px] pt-[9px] pr-1.5 flex justify-end border-t border-[#8f929b]">
                <button type="button" class="w-[93px] h-[26px] pb-0.5 bg-linear-to-b from-[#e3edff] via-[#d2e2ff] via-50% to-[#bed6ff] border border-[#b5d0f5]">&lt;&lt;上一步</button>
                <button type="button" class="w-[93px] h-[26px] pb-0.5 ml-px bg-linear-to-b from-[#e3edff] via-[#d2e2ff] via-50% to-[#bed6ff] border border-[#b5d0f5]">下一步 &gt;&gt;</button>
                <button type="button" class="w-[93px] h-[26px] pb-0.5 ml-[7px] bg-linear-to-b from-[#e3edff] via-[#d2e2ff] via-50% to-[#bed6ff] border border-[#b5d0f5]">取消</button>
                <button type="button" class="w-[93px] h-[26px] pb-0.5 ml-[7px] bg-linear-to-b from-[#e3edff] via-[#d2e2ff] via-50% to-[#bed6ff] border border-[#b5d0f5]">帮助</button>
            </div>
        </div>
    </div>
</body>
</html>
